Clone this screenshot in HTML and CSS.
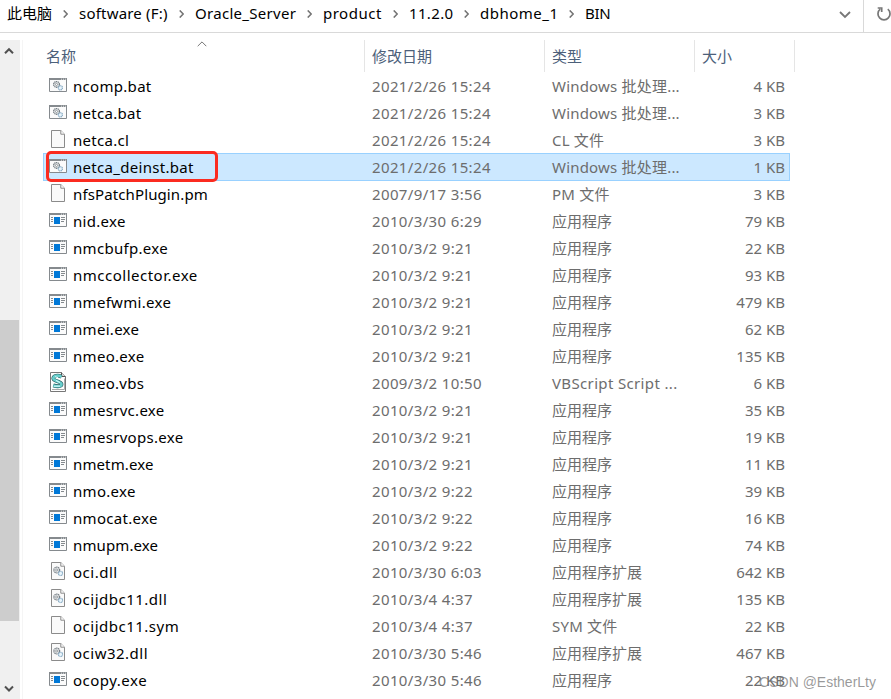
FILE: index.html
```
<!DOCTYPE html>
<html lang="zh-CN">
<head>
<meta charset="utf-8">
<title>BIN</title>
<link rel="stylesheet" href="styles.css">
</head>
<body>
<svg class="defs" aria-hidden="true">
  <symbol id="gears" viewBox="0 0 10 10">
    <circle cx="3.8" cy="3.8" r="2.7" fill="#eef0f1" stroke="#777f85" stroke-width="1.3" stroke-dasharray="1.2 .5"/>
    <circle cx="3.8" cy="3.8" r="1" fill="#fff" stroke="#858c91" stroke-width=".8"/>
    <circle cx="7.4" cy="7" r="2" fill="#e8f4fb" stroke="#86aac3" stroke-width="1.2" stroke-dasharray="1 .4"/>
  </symbol>
  <symbol id="window" viewBox="0 0 18 14">
    <path d="M.5.5h17v13H.5z" fill="#fbfbfb" stroke="#858a8e"/>
    <path d="M0 0h18v2H0z" fill="#858a8e"/>
    <path d="M12 .7h1v.8h-1zm2 0h1v.8h-1zm2 0h1v.8h-1z" fill="#fff"/>
  </symbol>
  <symbol id="page" viewBox="0 0 14 18">
    <path d="M.5.5h9.3l3.7 3.7v13.3H.5z" fill="#fafafa" stroke="#8b8b8b"/>
    <path d="M9.8.5v3.7h3.7" fill="#fff" stroke="#8b8b8b"/>
  </symbol>
  <symbol id="bat" viewBox="0 0 18 18">
    <use href="#window" y="2" width="18" height="14"/>
    <use href="#gears" x="3.5" y="4.4" width="10.6" height="10.6"/>
  </symbol>
  <symbol id="exe" viewBox="0 0 18 18">
    <use href="#window" y="2" width="18" height="14"/>
    <path d="M5 6h6v7H5z" fill="#0078d7"/>
    <path d="M2 6.5h2m-2 2h2m-2 2h2m8-4h4m-4 2h4m-4 2h3" stroke="#858a8e"/>
  </symbol>
  <symbol id="doc" viewBox="0 0 18 18"><use href="#page" x="2" width="14" height="18"/></symbol>
  <symbol id="dll" viewBox="0 0 18 18">
    <use href="#page" x="2" width="14" height="18"/>
    <use href="#gears" x="3.7" y="4" width="10.6" height="10.6"/>
  </symbol>
  <symbol id="vbs" viewBox="0 0 18 20">
    <path d="M1.5.5h11l4 4v15h-15z" fill="#fff" stroke="#777"/>
    <path d="M12.5.5v4h4" fill="#ddd" stroke="#555"/>
    <path d="M12.5 4.8C9 2.8 4.5 3.6 4.3 6.4c-.2 2.8 8 3 8.2 5.8.1 2.3-4 2.6-8.2 1.2" fill="none" stroke="#25595b" stroke-width="3.8"/>
    <path d="M12.5 4.8C9 2.8 4.5 3.6 4.3 6.4c-.2 2.8 8 3 8.2 5.8.1 2.3-4 2.6-8.2 1.2" fill="none" stroke="#68cfcd" stroke-width="2.6"/>
    <path d="M6 4.8l3 .8M7 8.5l4 2M5 14.2h6" stroke="#e5ffff"/>
    <path d="M3 17.5h12.5v-11" fill="none" stroke="#aaa"/>
  </symbol>
  <symbol id="sep" viewBox="0 0 5 8"><path d="M.7.4L4.2 4 .7 7.6" fill="none" stroke="#737373" stroke-width="1.5"/></symbol>
</svg>
<header class="address">
  <nav class="crumbs">
    <span class="crumb c-pc">此电脑</span><svg class="sep"><use href="#sep"/></svg>
    <span class="crumb c-drive">software (F:)</span><svg class="sep"><use href="#sep"/></svg>
    <span class="crumb c-server">Oracle_Server</span><svg class="sep"><use href="#sep"/></svg>
    <span class="crumb c-product">product</span><svg class="sep"><use href="#sep"/></svg>
    <span class="crumb c-version">11.2.0</span><svg class="sep"><use href="#sep"/></svg>
    <span class="crumb c-home">dbhome_1</span><svg class="sep"><use href="#sep"/></svg>
    <span class="crumb c-bin">BIN</span>
  </nav>
  <svg class="drop" viewBox="0 0 12 8"><path d="M1 1l5 5 5-5" fill="none" stroke="#777" stroke-width="1.8"/></svg>
  <div class="reload"><svg viewBox="0 0 16 16"><path d="M4.2 3.2A6 6 0 1 0 11.8 3.2M1.7 2h4v4" fill="none" stroke="#777" stroke-width="1.7"/></svg></div>
</header>
<div class="body">
  <aside class="scrollbar">
    <svg class="arrow" viewBox="0 0 10 8"><path d="M1 6.2l4-4 4 4" fill="none" stroke="#505050" stroke-width="2"/></svg>
    <div class="track"><div class="thumb"></div></div>
    <svg class="arrow" viewBox="0 0 10 8"><path d="M1 1.5l4 4 4-4" fill="none" stroke="#505050" stroke-width="2"/></svg>
  </aside>
  <main class="list">
    <div class="head">
      <span class="h">名称<svg class="sort" viewBox="0 0 10 6"><path d="M.7 5.2L5 .9l4.3 4.3" fill="none" stroke="#777"/></svg></span><span class="h">修改日期</span><span class="h">类型</span><span class="h">大小</span>
    </div>
    <div class="row"><svg class="icon"><use href="#bat"/></svg><span class="name">ncomp.bat</span><span class="date">2021/2/26 15:24</span><span class="type-bat">Windows 批处理...</span><span class="size">4 KB</span></div>
    <div class="row"><svg class="icon"><use href="#bat"/></svg><span class="name">netca.bat</span><span class="date">2021/2/26 15:24</span><span class="type-bat">Windows 批处理...</span><span class="size">3 KB</span></div>
    <div class="row"><svg class="icon"><use href="#doc"/></svg><span class="name">netca.cl</span><span class="date">2021/2/26 15:24</span><span class="type-bat">CL 文件</span><span class="size">3 KB</span></div>
    <div class="row selected"><svg class="icon"><use href="#bat"/></svg><span class="name">netca_deinst.bat</span><span class="date">2021/2/26 15:24</span><span class="type-bat">Windows 批处理...</span><span class="size">1 KB</span><i class="mark"></i></div>
    <div class="row"><svg class="icon"><use href="#doc"/></svg><span class="name tight">nfsPatchPlugin.pm</span><span class="date">2007/9/17 3:56</span><span class="type-bat">PM 文件</span><span class="size">3 KB</span></div>
    <div class="row"><svg class="icon"><use href="#exe"/></svg><span class="name">nid.exe</span><span class="date">2010/3/30 6:29</span><span>应用程序</span><span class="size">79 KB</span></div>
    <div class="row"><svg class="icon"><use href="#exe"/></svg><span class="name">nmcbufp.exe</span><span class="date">2010/3/2 9:21</span><span>应用程序</span><span class="size">22 KB</span></div>
    <div class="row"><svg class="icon"><use href="#exe"/></svg><span class="name loose">nmccollector.exe</span><span class="date">2010/3/2 9:21</span><span>应用程序</span><span class="size">93 KB</span></div>
    <div class="row"><svg class="icon"><use href="#exe"/></svg><span class="name">nmefwmi.exe</span><span class="date">2010/3/2 9:21</span><span>应用程序</span><span class="size">479 KB</span></div>
    <div class="row"><svg class="icon"><use href="#exe"/></svg><span class="name">nmei.exe</span><span class="date">2010/3/2 9:21</span><span>应用程序</span><span class="size">62 KB</span></div>
    <div class="row"><svg class="icon"><use href="#exe"/></svg><span class="name">nmeo.exe</span><span class="date">2010/3/2 9:21</span><span>应用程序</span><span class="size">135 KB</span></div>
    <div class="row"><svg class="icon vbs"><use href="#vbs"/></svg><span class="name">nmeo.vbs</span><span class="date">2009/3/2 10:50</span><span class="type-vbs">VBScript Script ...</span><span class="size">6 KB</span></div>
    <div class="row"><svg class="icon"><use href="#exe"/></svg><span class="name">nmesrvc.exe</span><span class="date">2010/3/2 9:21</span><span>应用程序</span><span class="size">35 KB</span></div>
    <div class="row"><svg class="icon"><use href="#exe"/></svg><span class="name">nmesrvops.exe</span><span class="date">2010/3/2 9:21</span><span>应用程序</span><span class="size">19 KB</span></div>
    <div class="row"><svg class="icon"><use href="#exe"/></svg><span class="name tight">nmetm.exe</span><span class="date">2010/3/2 9:21</span><span>应用程序</span><span class="size">11 KB</span></div>
    <div class="row"><svg class="icon"><use href="#exe"/></svg><span class="name">nmo.exe</span><span class="date">2010/3/2 9:22</span><span>应用程序</span><span class="size">39 KB</span></div>
    <div class="row"><svg class="icon"><use href="#exe"/></svg><span class="name">nmocat.exe</span><span class="date">2010/3/2 9:22</span><span>应用程序</span><span class="size">16 KB</span></div>
    <div class="row"><svg class="icon"><use href="#exe"/></svg><span class="name tight">nmupm.exe</span><span class="date">2010/3/2 9:22</span><span>应用程序</span><span class="size">74 KB</span></div>
    <div class="row"><svg class="icon"><use href="#dll"/></svg><span class="name loose">oci.dll</span><span class="date">2010/3/30 6:03</span><span>应用程序扩展</span><span class="size">642 KB</span></div>
    <div class="row"><svg class="icon"><use href="#dll"/></svg><span class="name loose">ocijdbc11.dll</span><span class="date">2010/3/4 4:37</span><span>应用程序扩展</span><span class="size">135 KB</span></div>
    <div class="row"><svg class="icon"><use href="#doc"/></svg><span class="name loose">ocijdbc11.sym</span><span class="date">2010/3/4 4:37</span><span class="type-bat">SYM 文件</span><span class="size">22 KB</span></div>
    <div class="row"><svg class="icon"><use href="#dll"/></svg><span class="name loose">ociw32.dll</span><span class="date">2010/3/30 5:46</span><span>应用程序扩展</span><span class="size">467 KB</span></div>
    <div class="row"><svg class="icon"><use href="#exe"/></svg><span class="name loose">ocopy.exe</span><span class="date">2010/3/30 5:46</span><span>应用程序</span><span class="size">22 KB</span></div>
  </main>
</div>
<div class="watermark">CSDN @EstherLty</div>
</body>
</html>
```
FILE: styles.css
```
*, *::before { box-sizing: border-box; }
html, body { height: 100%; }
body {
  margin: 0;
  background: #fff;
  overflow: hidden;
  position: relative;
  display: flex;
  flex-direction: column;
  font: 15px/27px "Noto Sans", "Noto Sans CJK SC", sans-serif;
  color: #000;
  white-space: nowrap;
}
svg { display: block; flex: none; }
.defs { position: absolute; width: 0; height: 0; }

.address {
  height: 33px;
  flex: none;
  display: flex;
  border-bottom: 1px solid #d9d9d9;
}
.crumbs { flex: 1; display: flex; gap: 11px; padding-left: 7px; height: 27px; align-items: center; }
.sep { width: 5px; height: 8px; }
.crumb { flex: none; }
.c-pc { width: 45px; }
.c-drive { width: 89px; letter-spacing: .2px; }
.c-server { width: 101px; letter-spacing: .3px; }
.c-product { width: 59px; letter-spacing: .5px; }
.c-version { width: 44px; letter-spacing: .35px; }
.c-home { width: 78px; letter-spacing: .5px; }
.c-bin { letter-spacing: -.3px; }
.drop { width: 12px; height: 8px; margin: 11px 12px 0 0; }
.reload { width: 28px; border-left: 1px solid #d9d9d9; padding: 6px 0 0 12px; overflow: hidden; }
.reload svg { width: 16px; height: 16px; }

.body { flex: 1; min-height: 0; display: flex; padding-top: 7px; }
.scrollbar {
  width: 20px;
  background: #f0f0f0;
  display: flex;
  flex-direction: column;
  padding: 7px 0 6px;
}
.track { flex: 1; padding-top: 265px; }
.thumb { width: 19px; height: 301px; background: #cdcdcd; }
.arrow { width: 10px; height: 8px; margin-left: 4px; }
.list { flex: 1; margin-left: 2px; border-left: 1px solid #f5f5f5; }

.head { display: grid; grid-template-columns: 342px 180px 150px 100px; height: 32px; }
.h {
  position: relative;
  border-right: 1px solid #e5e5e5;
  padding-left: 7px;
  line-height: 32px;
  color: #4c607a;
}
.h:first-child { padding-left: 23px; }
.sort { position: absolute; left: 174px; top: 1px; width: 10px; height: 6px; }

.row {
  position: relative;
  display: grid;
  grid-template-columns: 24px 299px 180px 150px 83px;
  align-items: center;
  height: 27px;
  margin-left: 26px;
  color: #6d6d6d;
  line-height: 27px;
}
.row > span { padding-top: 1px; height: 27px; }
.icon { width: 18px; height: 18px; margin-top: -1px; }
.icon.vbs { height: 20px; }
.name { color: #000; letter-spacing: .3px; }
.name.tight { letter-spacing: .12px; }
.name.loose { letter-spacing: .5px; }
.date { letter-spacing: .36px; }
.type-bat { letter-spacing: .2px; }
.type-vbs { letter-spacing: .35px; }
.size { text-align: right; }
.selected { z-index: 0; }
.selected::before {
  content: "";
  position: absolute;
  left: -6px;
  top: 0;
  width: 747px;
  height: 28px;
  background: #cce8ff;
  border: 1px solid #99d1ff;
  z-index: -1;
}
.mark {
  position: absolute;
  left: -3px;
  top: -2px;
  width: 172px;
  height: 31px;
  border: 3px solid #fb2b20;
  border-radius: 5px;
}
.watermark {
  position: absolute;
  right: 15px;
  bottom: 7px;
  font: 14px/20px "Liberation Sans", sans-serif;
  color: rgba(120, 120, 120, .75);
}
```
